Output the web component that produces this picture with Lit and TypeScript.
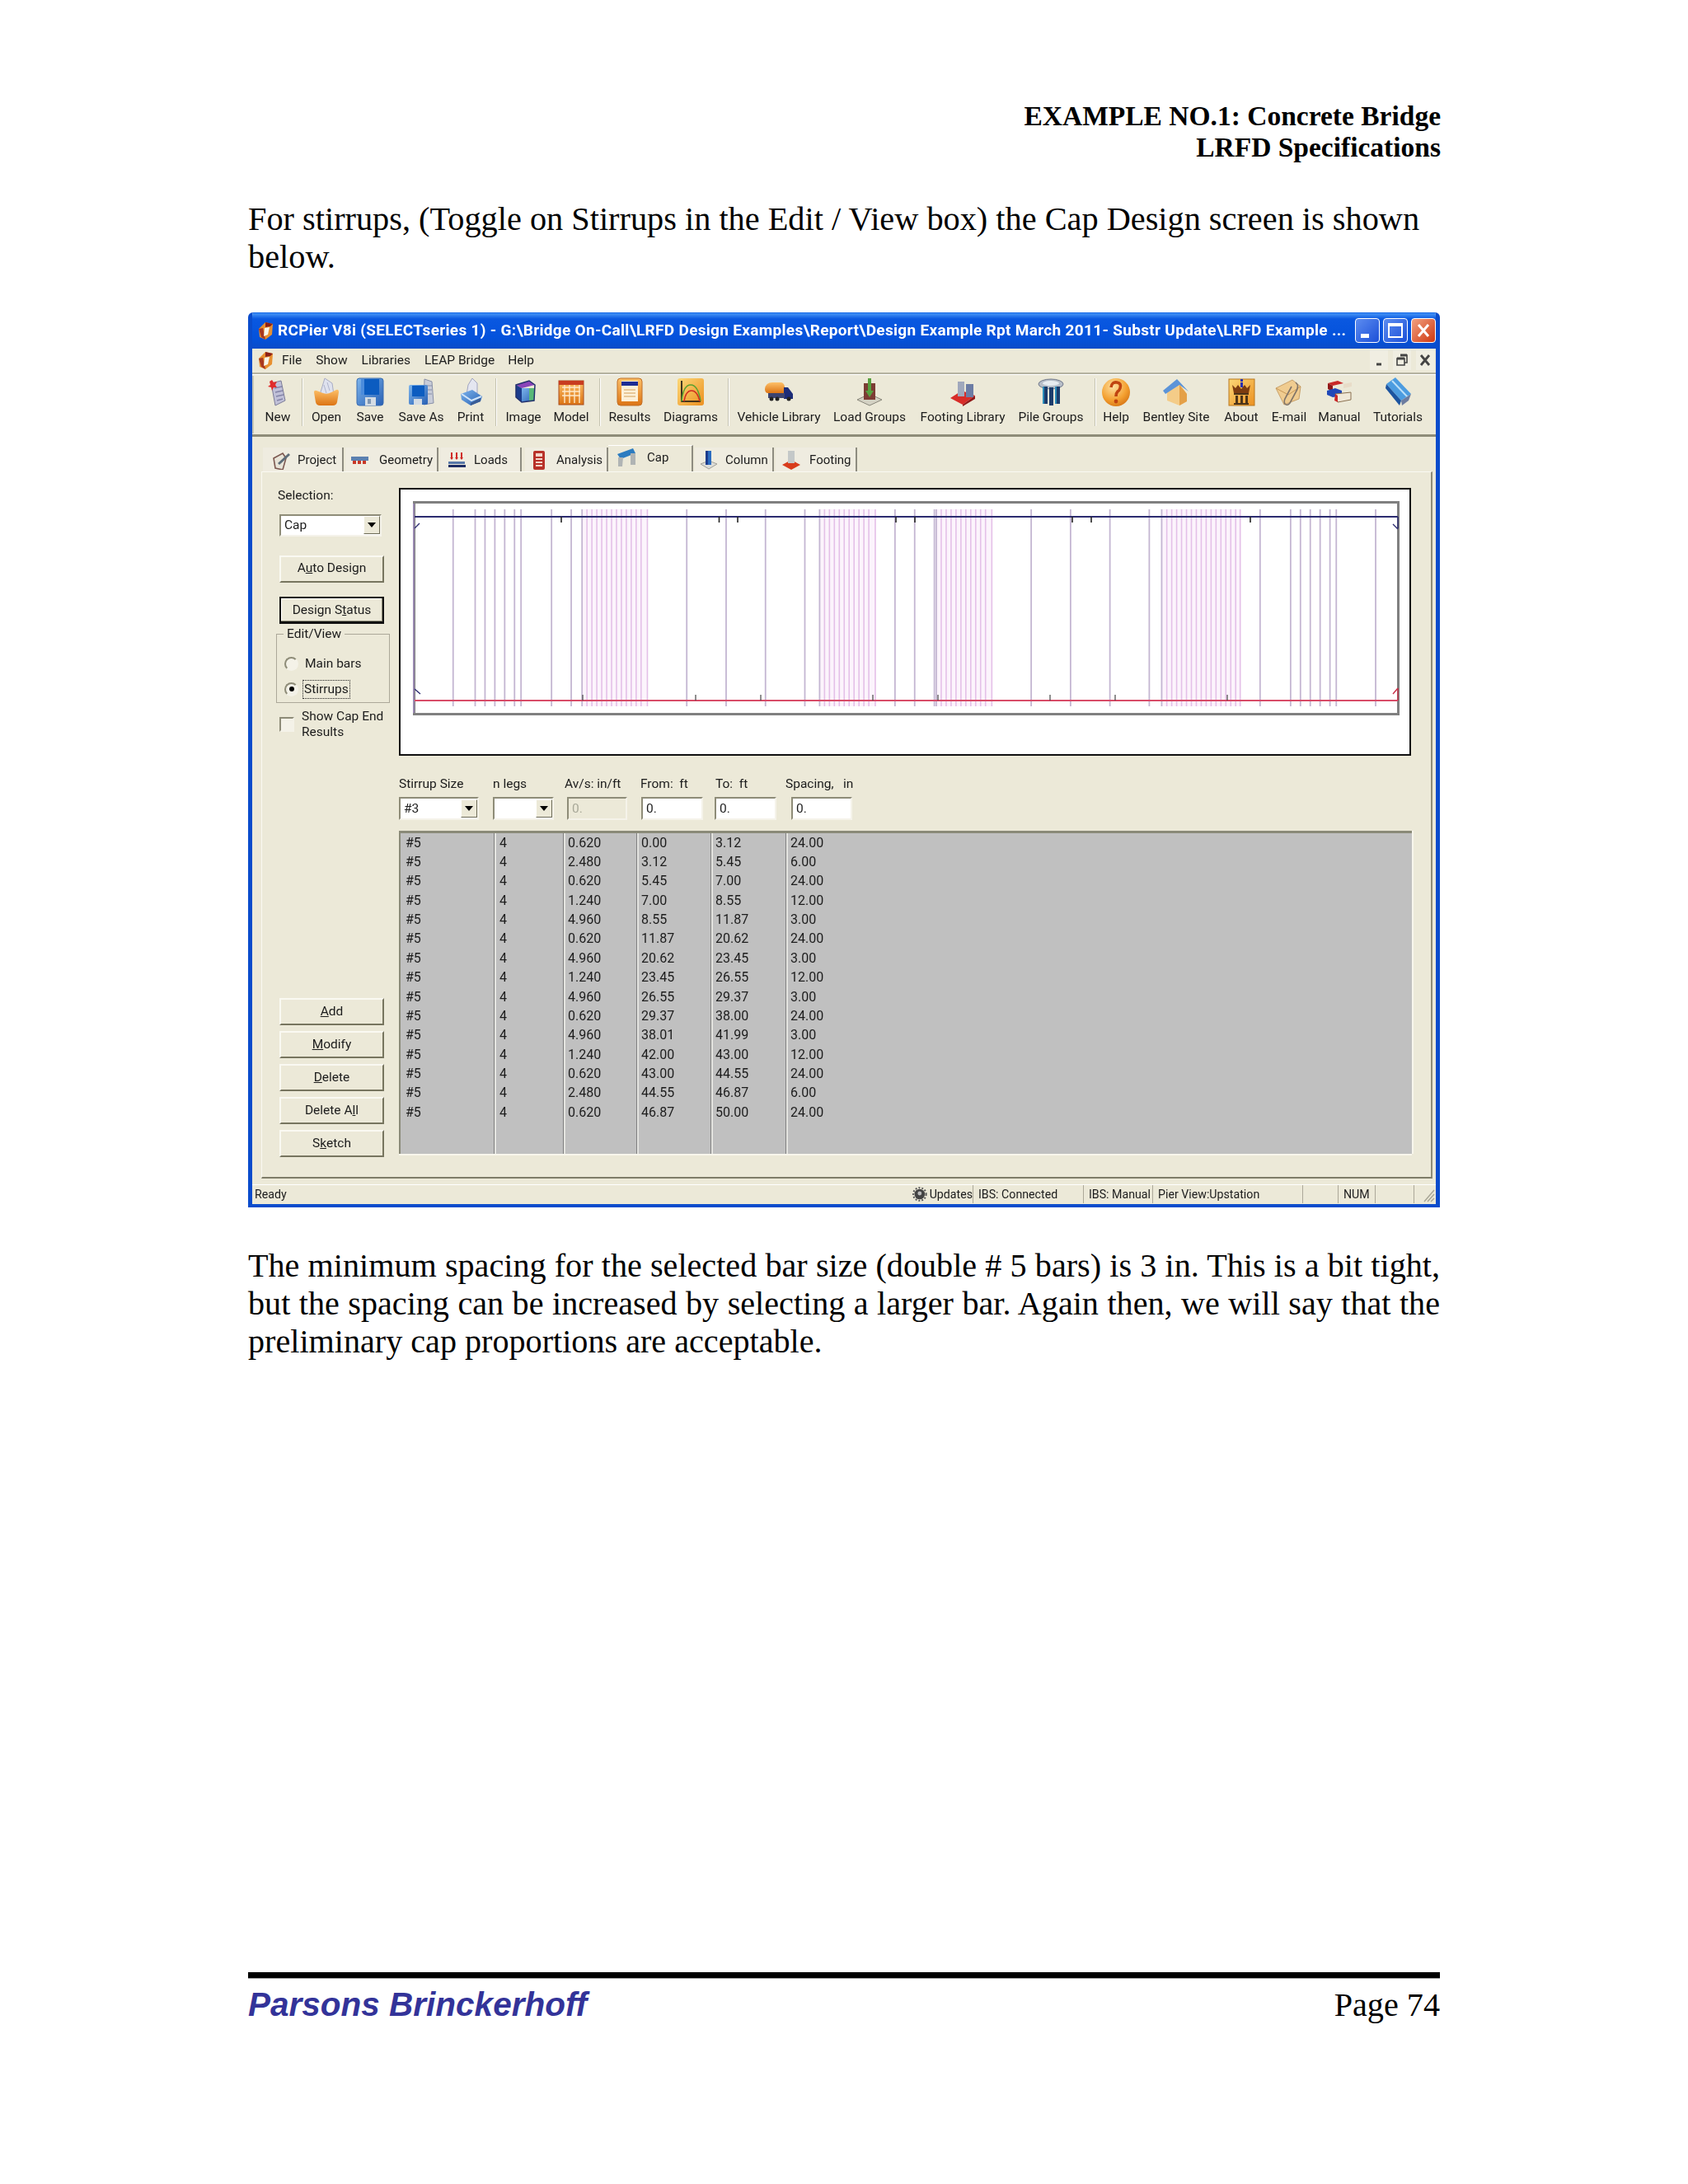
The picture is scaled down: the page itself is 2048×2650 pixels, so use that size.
import { LitElement, html, css, svg } from "lit";
import { customElement } from "lit/decorators.js";

const ic = (c: unknown, w = 40, h = 38) => html`<svg class="ico" width=${w} height=${h} viewBox="0 0 ${w} ${h}">${c}</svg>`;

const defs = html`<svg class="defs" width="0" height="0">
  <defs>
    <linearGradient id="org" x1="0" y1="0" x2="0" y2="1"><stop offset="0" stop-color="#fdc068"/><stop offset="1" stop-color="#dc7414"/></linearGradient>
    <linearGradient id="blu" x1="0" y1="0" x2="1" y2="1"><stop offset="0" stop-color="#7cb4ec"/><stop offset="1" stop-color="#2860b4"/></linearGradient>
    <linearGradient id="ylw" x1="0" y1="0" x2="1" y2="1"><stop offset="0" stop-color="#fcd878"/><stop offset="1" stop-color="#ec9020"/></linearGradient>
    <radialGradient id="ball" cx=".4" cy=".3" r=".8"><stop offset="0" stop-color="#fde0a0"/><stop offset=".6" stop-color="#f4a030"/><stop offset="1" stop-color="#d06c10"/></radialGradient>
  </defs>
</svg>`;

const I: Record<string, unknown> = {
  new: svg`<path d="M12 9 24 6l5 24-12 6Z" fill="#c0c0d8" stroke="#7c7c98"/><path d="M16 15l9-2M17 20l9-2M18 25l9-2M19 30l7-2" stroke="#8484a8" stroke-width="1.5"/><path d="M13 5l2 3 4-1-2 4 2 3-4 0-2 4-1-4-4-1 3-2-1-4Z" fill="#e02c2c"/>`,
  open: svg`<path d="M18 3 27 9l2 14H12Z" fill="#dfe2ee" stroke="#a8acc4"/><path d="M21 8l3 10M17 11l3 10" stroke="#b0b4cc"/><path d="M5 20q0-3 3-2l8 3q5 2 10-1l6-3q3-1 3 3l-2 12q-1 4-5 4H12q-4 0-5-4Z" fill="url(#org)"/>`,
  save: svg`<rect x="4" y="3" width="32" height="33" rx="3" fill="url(#blu)" stroke="#3a6cb0"/><rect x="9" y="4" width="22" height="19" fill="#0c5cc0"/><rect x="9" y="4" width="4" height="19" fill="#4c8cdc"/><rect x="14" y="26" width="13" height="10" fill="#d4dce4"/><rect x="17" y="28" width="4" height="6" fill="#8098b4"/>`,
  saveas: svg`<path d="M24 4l9 3 2 26-12 2Z" fill="#c8ccd8" stroke="#8890a8"/><path d="M27 12h6M27 17h6M27 22h6" stroke="#8890a8"/><rect x="5" y="11" width="23" height="24" rx="2" fill="url(#blu)"/><rect x="9" y="12" width="15" height="13" fill="#0c5cc0"/><rect x="11" y="28" width="10" height="7" fill="#d4dce4"/>`,
  print: svg`<path d="M22 3l6 6 0 12-13 2 2-12Z" fill="#e4e6f0" stroke="#a0a4c0"/><path d="M8 22l14-5 12 8-2 6-12 5-11-7Z" fill="url(#blu)"/><path d="M9 22l12 8 12-5" fill="none" stroke="#d0e4f8" stroke-width="2"/><path d="M20 36l12-5v-4l-12 6Z" fill="#3a5c94"/>`,
  image: svg`<path d="M11 11 27 6l7 5-16 4Z" fill="#8a44b8"/><path d="M11 11l7 4v17l-7-6Z" fill="#1c3c8c"/><path d="M18 15h16l-1 15-15 2Z" fill="url(#blu)"/><path d="M27 15h7l-1 15h-6Z" fill="#58b878"/><path d="M11 11 27 6l7 5-1 19-15 2-7-6Z" fill="none" stroke="#22306c" stroke-width="1.5"/>`,
  model: svg`<rect x="5" y="6" width="30" height="29" fill="url(#org)" stroke="#a84c1c"/><rect x="5" y="6" width="30" height="5" fill="#c83c20"/><path d="M9 14h22M9 19h22M9 24h22M12 11v22M18 11v22M24 11v22M30 11v22" stroke="#fde8c8" stroke-width="1.4"/>`,
  results: svg`<rect x="5" y="3" width="30" height="33" rx="4" fill="url(#org)" stroke="#c07028"/><rect x="10" y="6" width="20" height="25" fill="#fdf0d8"/><rect x="10" y="7" width="20" height="5" fill="#1c2c94"/><path d="M13 17h14M13 21h14M13 25h14" stroke="#e8c898" stroke-width="2"/>`,
  diagrams: svg`<rect x="4" y="3" width="32" height="33" rx="3" fill="url(#ylw)"/><path d="M9 6v25h23" fill="none" stroke="#111" stroke-width="1.6"/><path d="M9 31q2-20 11-20t12 20" fill="none" stroke="#5aa030" stroke-width="1.6"/><path d="M12 31q2-13 9-13t10 13" fill="none" stroke="#d03020" stroke-width="1.6"/>`,
  vehicle: svg`<path d="M3 16q1-8 9-8h10q4 0 5 5v8H7q-4 0-4-5Z" fill="url(#org)"/><path d="M26 14h5l6 8v6H26Z" fill="#1c2c78"/><rect x="7" y="21" width="20" height="6" fill="#3c4470"/><circle cx="11" cy="28" r="2.5" fill="#222"/><circle cx="18" cy="28" r="2.5" fill="#222"/><circle cx="32" cy="28" r="2.5" fill="#222"/>`,
  load: svg`<path d="M20 22l15 7-15 7-15-7Z" fill="#d4d2c4" stroke="#88867a"/><rect x="13" y="9" width="14" height="20" fill="#7c3c34"/><path d="M18 3h4v15h3l-5 8-5-8h3Z" fill="#58a040"/>`,
  footlib: svg`<path d="M5 27l14-9 16 6-15 11Z" fill="#d82c28"/><path d="M20 35l15-11v4l-15 9Z" fill="#901818"/><rect x="14" y="7" width="8" height="18" fill="#a0a8bc"/><rect x="24" y="10" width="9" height="16" fill="#6c7ca4"/>`,
  pile: svg`<ellipse cx="20" cy="10" rx="15" ry="6" fill="#b8bec8" stroke="#70788a"/><ellipse cx="20" cy="9" rx="10" ry="3" fill="#e8ecf0"/><path d="M10 13h6v21h-6ZM18 14h5v22h-5ZM25 13h6v21h-6Z" fill="#1c3c6c"/><path d="M10 13h2v21h-2ZM25 13h2v21h-2Z" fill="#2c8cb8"/>`,
  help: svg`<circle cx="20" cy="20" r="17" fill="url(#ball)"/><path d="M14 14q1-7 7-6 6 1 4 7-1 3-3 4-2 2-2 6" fill="none" stroke="#c04410" stroke-width="3.6"/><circle cx="20" cy="31" r="2.4" fill="#c04410"/>`,
  bentley: svg`<path d="M9 20 24 9l9 13v9l-9 5-15-6Z" fill="#f4cc88"/><path d="M4 18 21 4l14 15-11-8-17 11Z" fill="#5c94d8"/><path d="M24 11l9 11v9l-9 5Z" fill="#e4a048"/>`,
  about: svg`<rect x="5" y="4" width="31" height="32" fill="url(#ylw)" stroke="#b87820"/><path d="M9 11l4 4 3-4 4 5 4-5 3 4 4-4-2 10H11Z" fill="#7c3c10"/><path d="M11 21h18v2H11ZM13 24h3v9h-3ZM19 24h3v9h-3ZM25 24h3v9h-3ZM11 33h18v2H11Z" fill="#4c3418"/><rect x="19" y="4" width="3" height="3" fill="#2830b0"/><rect x="19" y="8" width="3" height="6" fill="#2830b0"/>`,
  email: svg`<path d="M4 15 24 5l10 8-2 15-18 7Z" fill="#f0cc90" stroke="#c8a068"/><path d="M4 15l15 8 15-10" fill="none" stroke="#c89858"/><path d="M28 8q5 4 0 12l-7 13q-3 4-6 1-2-3 1-8l7-13" fill="none" stroke="#807468" stroke-width="1.6"/>`,
  manual: svg`<path d="M6 9l12-3 7 3-13 3Z" fill="#c82828"/><path d="M6 9l6 3v7l-6-3Z" fill="#901818"/><path d="M5 18l10-3 8 3v6l-11 2-7-3Z" fill="#2048b8"/><path d="M15 22l19-2v9l-16 3Z" fill="#f0e8d8" stroke="#8a7050"/><path d="M15 22l3 2v8l-4-2Z" fill="#c82828"/><path d="M25 10l10-2v5l-10 2Z" fill="#e8dcc8"/>`,
  tutorials: svg`<path d="M6 10 17 2l19 20-12 8Z" fill="#4c9ce0"/><path d="M6 10l18 20-2 6L5 15Z" fill="#1c54a0"/><path d="M13 6l19 20" stroke="#bce0f8" stroke-width="2"/><path d="M24 30l12-8-3 8-8 6Z" fill="#6c7ca0"/>`,
  tproject: svg`<path d="M3 10 14 4l4 6-4 14-9-2Z" fill="#e8e4d8" stroke="#7c5850" stroke-width="1.6"/><path d="M8 16 21 4l2 2-13 12Z" fill="#5c6c78"/>`,
  tgeometry: svg`<rect x="1" y="8" width="21" height="5" fill="#5c80b0"/><path d="M3 13h4v4H3ZM9 13h4v4H9ZM15 13h4v4h-4Z" fill="#c83828"/>`,
  tloads: svg`<path d="M5 3v8M11 3v8M17 3v8" stroke="#d02c28" stroke-width="2"/><path d="M3 9l2 3 2-3ZM9 9l2 3 2-3ZM15 9l2 3 2-3Z" fill="#d02c28"/><path d="M1 14h20v3H1Z" fill="#5878a8"/><path d="M1 18h21v3H1Z" fill="#1c2c64"/>`,
  tanalysis: svg`<rect x="2" y="1" width="14" height="23" rx="2" fill="#b83028"/><rect x="5" y="4" width="8" height="4" fill="#f4d4c8"/><path d="M5 11h8M5 15h8M5 19h8" stroke="#f4d4c8" stroke-width="2"/>`,
  tcap: svg`<path d="M1 8 20 1l3 6L5 14Z" fill="#2c7cc0"/><path d="M2 12h6l-1 11H2ZM17 7h6v14h-6Z" fill="#b0b4b4"/>`,
  tcolumn: svg`<path d="M2 17 12 13l10 4-10 6Z" fill="#dcdcd8" stroke="#a0a098"/><rect x="8" y="1" width="7" height="17" fill="#2c6cc0"/><rect x="8" y="1" width="3" height="17" fill="#1c3c8c"/>`,
  tfooting: svg`<path d="M1 18 12 12l11 6-11 6Z" fill="#d83c1c"/><rect x="8" y="1" width="8" height="15" fill="#c4c8c8"/>`,
};

const appLogo = svg`<path d="M3 10 11 2l9 2-1 13-8 6-7-3Z" fill="#e89030"/><path d="M11 2l9 2-3 3-6 1Z" fill="#8c2018"/><path d="M3 10l3 10 5 3-3-14Z" fill="#a83820"/><path d="M10 9l6-1-2 9-5 2Z" fill="#f8f6ec"/>`;

const toolbar = [
  { l: "New", w: 58, i: "new", sep: 0 },
  { l: "Open", w: 56, i: "open", sep: 2 },
  { l: "Save", w: 50, i: "save" },
  { l: "Save As", w: 74, i: "saveas" },
  { l: "Print", w: 46, i: "print" },
  { l: "Image", w: 64, i: "image", sep: 7 },
  { l: "Model", w: 52, i: "model" },
  { l: "Results", w: 70, i: "results", sep: 8 },
  { l: "Diagrams", w: 78, i: "diagrams" },
  { l: "Vehicle Library", w: 120, i: "vehicle", sep: 6 },
  { l: "Load Groups", w: 100, i: "load" },
  { l: "Footing Library", w: 126, i: "footlib" },
  { l: "Pile Groups", w: 88, i: "pile" },
  { l: "Help", w: 48, i: "help", sep: 9 },
  { l: "Bentley Site", w: 98, i: "bentley" },
  { l: "About", w: 60, i: "about" },
  { l: "E-mail", w: 56, i: "email" },
  { l: "Manual", w: 66, i: "manual" },
  { l: "Tutorials", w: 76, i: "tutorials" },
];

const tabs = [
  { l: "Project", w: 98, g: 2, pl: 10, tx: 32, i: "tproject" },
  { l: "Geometry", w: 113, g: 2, pl: 6, tx: 35, i: "tgeometry" },
  { l: "Loads", w: 99, g: 4, pl: 9, tx: 32, i: "tloads" },
  { l: "Analysis", w: 101, g: 0, pl: 8, tx: 30, i: "tanalysis" },
  { l: "Cap", w: 103, g: 2, pl: 10, tx: 37, i: "tcap", on: true },
  { l: "Column", w: 96, g: 2, pl: 5, tx: 32, i: "tcolumn" },
  { l: "Footing", w: 99, g: 0, pl: 7, tx: 34, i: "tfooting" },
];

const rows = [
  ["#5", "4", "0.620", "0.00", "3.12", "24.00"],
  ["#5", "4", "2.480", "3.12", "5.45", "6.00"],
  ["#5", "4", "0.620", "5.45", "7.00", "24.00"],
  ["#5", "4", "1.240", "7.00", "8.55", "12.00"],
  ["#5", "4", "4.960", "8.55", "11.87", "3.00"],
  ["#5", "4", "0.620", "11.87", "20.62", "24.00"],
  ["#5", "4", "4.960", "20.62", "23.45", "3.00"],
  ["#5", "4", "1.240", "23.45", "26.55", "12.00"],
  ["#5", "4", "4.960", "26.55", "29.37", "3.00"],
  ["#5", "4", "0.620", "29.37", "38.00", "24.00"],
  ["#5", "4", "4.960", "38.01", "41.99", "3.00"],
  ["#5", "4", "1.240", "42.00", "43.00", "12.00"],
  ["#5", "4", "0.620", "43.00", "44.55", "24.00"],
  ["#5", "4", "2.480", "44.55", "46.87", "6.00"],
  ["#5", "4", "0.620", "46.87", "50.00", "24.00"],
];

const colW = [116, 84, 89, 90, 91, 0];

const fields = [
  { l: "Stirrup Size", lw: 114, w: 97, g: 0, t: "combo", v: "#3" },
  { l: "n legs", lw: 87, w: 74, g: 17, t: "combo", v: "" },
  { l: "Av/s: in/ft", lw: 92, w: 73, g: 16, t: "off", v: "0." },
  { l: "From:\u00a0 ft", lw: 91, w: 75, g: 17, t: "in", v: "0." },
  { l: "To:\u00a0 ft", lw: 85, w: 75, g: 14, t: "in", v: "0." },
  { l: "Spacing,\u00a0\u00a0\u00a0in", lw: 100, w: 74, g: 18, t: "in", v: "0." },
];

const X0 = 503, PXFT = 23.88;
const fx = (ft: number) => X0 + ft * PXFT;

function stirrups() {
  const sparse: number[] = [];
  const dense: number[] = [];
  const zones: [number, number][] = [];
  for (const r of rows) {
    const from = parseFloat(r[3]), to = parseFloat(r[4]), sp = parseFloat(r[5]) / 12;
    const bag = sp === 0.25 ? dense : sparse;
    if (sp === 0.25) zones.push([fx(from), fx(to)]);
    for (let x = from + sp; x < to - 0.08; x += sp) bag.push(fx(x));
    if (to < 50) bag.push(fx(to));
  }
  return { sparse, dense, zones };
}

const topTicks = [682, 873.5, 896, 1088, 1111, 1302, 1325, 1518];
const botTicks = [708, 845, 924, 1060, 1139, 1275, 1354, 1490];

function drawing() {
  const s = stirrups();
  return html`<svg class="draw" width="1228" height="325" viewBox="485 592 1228 325">
    <rect x="486" y="593" width="1226" height="323" fill="#fff" stroke="#111" stroke-width="2"/>
    <rect x="503.5" y="609.5" width="1194" height="257" fill="#fff" stroke="#808080" stroke-width="3"/>
    <path d="M503 611V865" stroke="#9888b0" stroke-width="2"/>
    ${s.zones.map(([a, b]) => svg`<rect x=${a} y="618" width=${b - a} height="239" fill="#fcf4fc"/>`)}
    ${s.sparse.map((x) => svg`<path d="M${x} 618V857" stroke="#c4b6d2" stroke-width="1.8"/>`)}
    ${s.dense.map((x) => svg`<path d="M${x} 618V857" stroke="#e4c0e8" stroke-width="1.6"/>`)}
    <path d="M504 627H1697" stroke="#2c2c70" stroke-width="2"/>
    <path d="M504 850H1697" stroke="#d84c68" stroke-width="2"/>
    ${topTicks.map((x) => svg`<path d="M${x} 627v7" stroke="#222" stroke-width="1.6"/>`)}
    ${botTicks.map((x) => svg`<path d="M${x} 850v-7" stroke="#444" stroke-width="1.2"/>`)}
    <path d="M504 641l6-6M504 836l7 6M1697 627v14M1691 636l6 6" stroke="#2c2c70" fill="none" stroke-width="1.4"/>
    <path d="M1697 850v-15M1691 842l6-7" stroke="#c83048" fill="none" stroke-width="1.4"/>
  </svg>`;
}

@customElement("app-root")
export class AppRoot extends LitElement {
  static styles = css`
    :host { display: block; width: 2048px; height: 2650px; background: #fff; color: #000; font-family: "Liberation Serif", serif; }
    .page { box-sizing: border-box; width: 2048px; height: 2650px; padding: 122px 301px 0; display: flex; flex-direction: column; }
    .head { text-align: right; font-weight: bold; font-size: 33.5px; line-height: 38.4px; margin-right: -1px; }
    .p { font-size: 40.3px; line-height: 46.4px; margin: 0; }
    .p1 { margin-top: 44px; }
    .p2 { margin-top: 48px; text-align: justify; font-size: 40.15px; }
    .foot-rule { height: 7px; background: #000; border-bottom: 1px solid #999; margin-top: auto; }
    .foot { display: flex; justify-content: space-between; align-items: center; height: 58px; padding-top: 2px; margin-bottom: 189px; }
    .brand { font-family: "Liberation Sans", sans-serif; font-weight: bold; font-style: italic; font-size: 40.5px; color: #333399; }
    .pg { font-size: 40.2px; }

    .defs { display: block; }
    .win { box-sizing: border-box; width: 1446px; height: 1086px; margin-top: 43px; background: #ece9d8; display: flex; flex-direction: column; border: solid #0a4ccc; border-width: 0 5px 4px 5px; border-radius: 6px 6px 0 0; font-family: Roboto, "Liberation Sans", sans-serif; font-size: 15.5px; color: #1c1c1c; filter: blur(0.5px); overflow: hidden; }
    .title { flex: none; height: 44px; margin: 0 -5px; padding: 0 5px 0 10px; display: flex; align-items: center; background: linear-gradient(#1c6ce8 0, #3c8cf4 5%, #0a58e0 18%, #0452dc 70%, #0a4cc8 100%); color: #fff; font-weight: 700; font-size: 19px; }
    .title .t { flex: 1; white-space: nowrap; margin-left: 4px; letter-spacing: .31px; overflow: hidden; }
    .wbtns { display: flex; gap: 4px; }
    .wb { width: 30px; height: 30px; box-sizing: border-box; border: 1px solid #fff; border-radius: 4px; background: linear-gradient(135deg, #5c8cf0, #1c50d8); display: flex; }
    .wb.x { background: linear-gradient(135deg, #f0a080, #d03810); align-items: center; justify-content: center; }
    .wb.mn::after { content: ""; width: 10px; height: 5px; background: #fff; margin: auto auto 5px 6px; }
    .wb.mx::after { content: ""; box-sizing: border-box; width: 18px; height: 18px; border: 2px solid #fff; border-top-width: 4px; margin: auto; }
    .menu { flex: none; height: 29px; display: flex; align-items: center; padding-left: 5px; }
    .menu .mi { white-space: nowrap; }
    .menuitems { display: flex; flex: 1; align-items: center; }
    .mdi { display: flex; align-items: center; gap: 6px; padding-right: 2px; }
    .mdi b { display: flex; width: 22px; height: 24px; justify-content: center; align-items: center; background: #f0eee2; }
    .tool { flex: none; box-sizing: border-box; height: 78px; display: flex; padding: 2px 0 0 0; border-top: 2px solid #b4b2a0; border-bottom: 3px solid #8e8c78; box-shadow: inset 0 1px 0 #fff; }
    .grip { width: 2px; height: 70px; background: #c8c6b4; }
    .tb { flex: none; display: flex; flex-direction: column; align-items: center; }
    .tb .ico { display: block; }
    .tb span { white-space: nowrap; line-height: 20px; margin-top: 2px; }
    .sep { flex: none; width: 2px; height: 58px; background: #c4c2b0; border-right: 1px solid #fff; box-sizing: border-box; margin-top: 3px; }
    .tabs { flex: none; height: 32px; margin-top: 10px; padding-left: 13px; display: flex; align-items: flex-end; font-size: 15px; }
    .tab { box-sizing: border-box; height: 29px; padding-top: 1px; display: flex; align-items: center; border-right: 2px solid #8e8c80; background: #efece0; white-space: nowrap; }
    .tab.on { height: 32px; padding-top: 0; padding-bottom: 2px; background: #ece9d8; border-top: 1px solid #fff; }
    .tab .ti { display: flex; flex: none; }
    .panel { flex: none; box-sizing: border-box; height: 858px; margin: 0 4px 0 11px; padding: 0 23px 24px 21px; display: flex; gap: 19px; border: solid; border-width: 1px 2px 2px 0; border-color: #faf9f2 #8e8c78 #7e7c68 #faf9f2; border-left: 1px solid #faf9f2; }
    .left { flex: none; width: 126px; display: flex; flex-direction: column; }
    .lbl { height: 20px; line-height: 20px; white-space: nowrap; }
    .sel { margin: 18px 0 0 -2px; }
    .combo, .inp { box-sizing: border-box; height: 28px; background: #fff; display: flex; align-items: center; padding-left: 4px; border: 2px solid; border-color: #8e8c78 #f5f3ea #f5f3ea #8e8c78; white-space: nowrap; }
    .combo .v { flex: 1; }
    .ar { flex: none; width: 20px; height: 22px; box-sizing: border-box; background: #ece9d8; border: 1px solid; border-color: #fff #6e6c58 #6e6c58 #fff; display: flex; align-items: center; justify-content: center; }
    .ar::after { content: ""; border: 5px solid transparent; border-top: 6px solid #000; border-bottom: 0; }
    .combo.c1 { margin-top: 13px; height: 27px; width: 124px; }
    .inp.off { background: #ece9d8; color: #a8a898; }
    .btn { box-sizing: border-box; width: 127px; height: 33px; display: flex; align-items: center; justify-content: center; background: #ece9d8; border: 2px solid; border-color: #faf9f2 #77755f #77755f #faf9f2; white-space: nowrap; }
    .btn.b1 { margin-top: 23px; padding-bottom: 2px; }
    .btn.b2 { margin-top: 17px; border: 2px solid #111; border-bottom-width: 3px; box-shadow: inset -1px -1px 0 #8e8c78, inset 1px 1px 0 #fff; }
    .grp { box-sizing: border-box; width: 138px; height: 84px; margin: 12px 0 0 -4px; border: 1px solid #aca899; position: relative; padding: 20px 0 0 9px; }
    .grp .leg { position: absolute; left: 8px; top: -11px; background: #ece9d8; padding: 0 4px; line-height: 20px; }
    .rad { display: flex; align-items: center; height: 31px; }
    .dot { box-sizing: border-box; flex: none; width: 17px; height: 17px; border-radius: 50%; border: 2px solid; border-color: #8e8c78 #f4f2e8 #f4f2e8 #8e8c78; background: #f4f2e8; display: flex; align-items: center; justify-content: center; margin-right: 8px; }
    .dot.on::after { content: ""; width: 6px; height: 6px; border-radius: 50%; background: #000; }
    .focus { outline: 1px dotted #222; padding: 0 1px; margin-left: -2px; line-height: 21px; }
    .chk { display: flex; align-items: center; margin-top: 7px; width: 140px; line-height: 19px; }
    .box { box-sizing: border-box; flex: none; width: 18px; height: 18px; margin-right: 9px; border: 2px solid; border-color: #8e8c78 #f4f2e8 #f4f2e8 #8e8c78; background: #f4f2e8; }
    .acts { margin-top: auto; display: flex; flex-direction: column; gap: 7px; }
    .right { flex: 1; min-width: 0; padding-top: 19px; display: flex; flex-direction: column; }
    .draw { display: block; flex: none; }
    .frow { display: flex; }
    .labels { margin-top: 24px; height: 20px; line-height: 20px; white-space: nowrap; }
    .inputs { margin-top: 6px; }
    .tbl { box-sizing: border-box; height: 392px; margin-top: 13px; display: flex; background: #c0c0c0; border: solid; border-width: 3px 0 0 2px; border-color: #8a8a78; box-shadow: 0 2px 0 #f8f6ec, 2px 0 0 #f8f6ec; font-size: 16px; }
    .col { box-sizing: border-box; flex: none; border-right: 2px solid #e4e4e0; padding: 0 0 0 3px; box-shadow: inset -1px 0 0 #808080; }
    .col:first-child { padding-left: 6px; }
    .col:nth-child(2) { padding-left: 4px; }
    .col:last-child { flex: 1; border: 0; box-shadow: none; }
    .cell { height: 23.36px; line-height: 23.36px; white-space: nowrap; }
    .stgap { flex: none; height: 7px; }
    .status { flex: none; height: 23px; display: flex; align-items: center; border-top: 1px solid #fff; margin-left: -1px; font-size: 14.2px; }
    .status .rd { flex: 1; padding-left: 4px; }
    .pane { box-sizing: border-box; flex: none; height: 22px; line-height: 22px; border-right: 1px solid #aca899; padding-left: 6px; white-space: nowrap; display: flex; align-items: center; }
    .pane svg { margin-right: 3px; }
    .sz { flex: none; width: 26px; height: 22px; display: flex; justify-content: flex-end; }
  `;

  render() {
    return html`${defs}
      <div class="page">
        <div class="head">EXAMPLE NO.1: Concrete Bridge<br />LRFD Specifications</div>
        <p class="p p1">For stirrups, (Toggle on Stirrups in the Edit / View box) the Cap Design screen is shown below.</p>
        ${this.win()}
        <p class="p p2">The minimum spacing for the selected bar size (double # 5 bars) is 3 in. This is a bit tight, but the spacing can be increased by selecting a larger bar. Again then, we will say that the preliminary cap proportions are acceptable.</p>
        <div class="foot-rule"></div>
        <div class="foot"><span class="brand">Parsons Brinckerhoff</span><span class="pg">Page 74</span></div>
      </div>`;
  }

  win() {
    return html`<div class="win">
      <div class="title">
        ${ic(appLogo, 22, 24)}
        <span class="t">RCPier V8i (SELECTseries 1) - G:\\Bridge On-Call\\LRFD Design Examples\\Report\\Design Example Rpt March 2011- Substr Update\\LRFD Example ...</span>
        <div class="wbtns">
          <div class="wb mn"></div><div class="wb mx"></div>
          <div class="wb x">${ic(svg`<path d="M3 3l12 14M15 3 3 17" stroke="#fff" stroke-width="3"/>`, 18, 20)}</div>
        </div>
      </div>
      <div class="menu">
        <div class="menuitems">
          ${ic(appLogo, 22, 24)}
          <span class="mi" style="margin-left:9px">File</span>
          <span class="mi" style="margin-left:17px">Show</span>
          <span class="mi" style="margin-left:17px">Libraries</span>
          <span class="mi" style="margin-left:17px">LEAP Bridge</span>
          <span class="mi" style="margin-left:16px">Help</span>
        </div>
        <div class="mdi">
          <b>${ic(svg`<path d="M6 14h6" stroke="#444" stroke-width="3"/>`, 18, 18)}</b>
          <b>${ic(svg`<path d="M7 3h8v9h-3M3 7h9v8H3Z" fill="none" stroke="#444" stroke-width="1.6"/><path d="M7 3h8M3 7h9" stroke="#444" stroke-width="3"/>`, 18, 18)}</b>
          <b>${ic(svg`<path d="M4 3l10 12M14 3 4 15" stroke="#444" stroke-width="2.8"/>`, 18, 18)}</b>
        </div>
      </div>
      <div class="tool">
        <div class="grip"></div>
        ${toolbar.map(
          (t) => html`${t.sep !== undefined && t.sep !== 0
              ? html`<div class="sep" style="margin-left:${t.sep === 2 ? 0 : t.sep}px"></div>`
              : ""}
            <div class="tb" style="width:${t.w}px">${ic(I[t.i])}<span>${t.l}</span></div>`
        )}
      </div>
      <div class="tabs">
        ${tabs.map(
          (t) => html`<div class="tab ${t.on ? "on" : ""}" style="width:${t.w}px;margin-right:${t.g}px;padding-left:${t.pl}px">
            <span class="ti" style="width:${t.tx}px">${ic(I[t.i], 24, 24)}</span>${t.l}
          </div>`
        )}
      </div>
      <div class="panel">
        <div class="left">
          <div class="lbl sel">Selection:</div>
          <div class="combo c1"><span class="v">Cap</span><span class="ar"></span></div>
          <div class="btn b1"><span>A<u>u</u>to Design</span></div>
          <div class="btn b2"><span>Design S<u>t</u>atus</span></div>
          <div class="grp">
            <span class="leg">Edit/View</span>
            <div class="rad"><span class="dot"></span>Main bars</div>
            <div class="rad"><span class="dot on"></span><span class="focus">Stirrups</span></div>
          </div>
          <div class="chk"><span class="box"></span><span>Show Cap End<br />Results</span></div>
          <div class="acts">
            <div class="btn"><span><u>A</u>dd</span></div>
            <div class="btn"><span><u>M</u>odify</span></div>
            <div class="btn"><span><u>D</u>elete</span></div>
            <div class="btn"><span>Delete A<u>l</u>l</span></div>
            <div class="btn"><span>S<u>k</u>etch</span></div>
          </div>
        </div>
        <div class="right">
          ${drawing()}
          <div class="frow labels">${fields.map((f) => html`<span style="width:${f.lw}px">${f.l}</span>`)}</div>
          <div class="frow inputs">
            ${fields.map((f) =>
              f.t === "combo"
                ? html`<div class="combo" style="width:${f.w}px;margin-left:${f.g}px"><span class="v">${f.v}</span><span class="ar"></span></div>`
                : html`<div class="inp ${f.t === "off" ? "off" : ""}" style="width:${f.w}px;margin-left:${f.g}px">${f.v}</div>`
            )}
          </div>
          <div class="tbl">
            ${colW.map(
              (w, c) => html`<div class="col" style=${w ? `width:${w}px` : ""}>
                ${rows.map((r) => html`<div class="cell">${r[c]}</div>`)}
              </div>`
            )}
          </div>
        </div>
      </div>
      <div class="stgap"></div>
      <div class="status">
        <span class="rd">Ready</span>
        <div class="pane" style="width:80px">
          ${ic(svg`<circle cx="9" cy="9" r="6.5" fill="#444"/><circle cx="9" cy="9" r="8" fill="none" stroke="#555" stroke-width="2" stroke-dasharray="2 2"/><circle cx="9" cy="8" r="2.5" fill="#bbb"/>`, 18, 18)}Updates
        </div>
        <div class="pane" style="width:134px">IBS: Connected</div>
        <div class="pane" style="width:84px">IBS: Manual</div>
        <div class="pane" style="width:182px">Pier View:Upstation</div>
        <div class="pane" style="width:43px"></div>
        <div class="pane" style="width:45px">NUM</div>
        <div class="pane" style="width:47px"></div>
        <div class="sz">${ic(svg`<path d="M20 6 8 20M20 11l-8 9M20 16l-4 4" stroke="#a8a696" stroke-width="1.5"/>`, 22, 22)}</div>
      </div>
    </div>`;
  }
}
